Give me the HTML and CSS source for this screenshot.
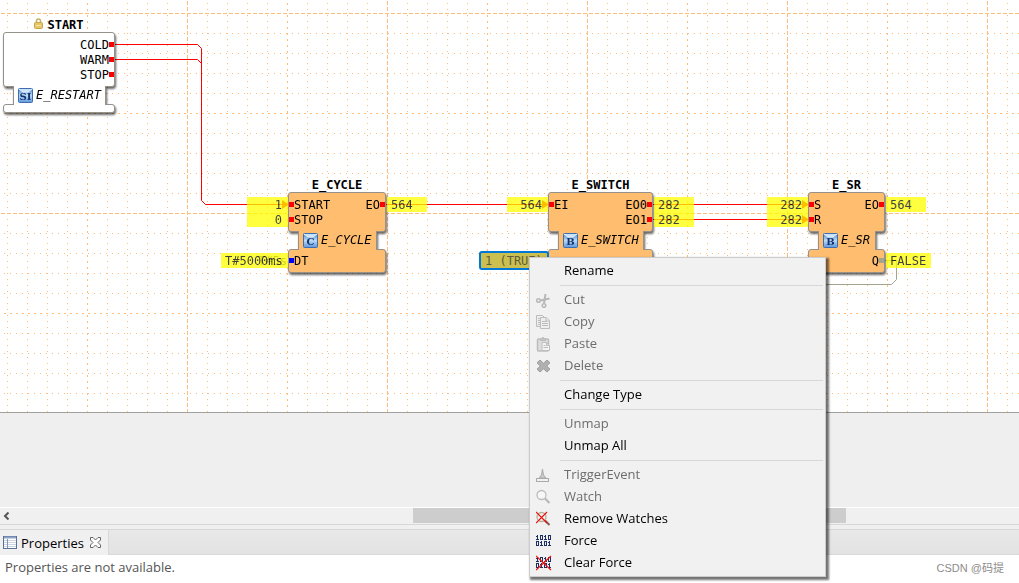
FILE: index.html
```
<!DOCTYPE html>
<html lang="en">
<head>
    <meta charset="UTF-8">
    <meta name="viewport" content="width=device-width, initial-scale=1.0">
    <title>Function Block Editor</title>
    <link rel="stylesheet" href="styles.css">
</head>
<body>
    <main class="editor">
        <div class="canvas">
            <svg class="grid" width="100%" height="100%" shape-rendering="crispEdges">
                <defs>
                    <pattern id="dots-v" width="20" height="6" patternUnits="userSpaceOnUse">
                        <rect x="7" y="3" width="1" height="1" fill="#ffbd78" />
                    </pattern>
                    <pattern id="dots-h" width="6" height="20" patternUnits="userSpaceOnUse">
                        <rect x="4" y="13" width="1" height="1" fill="#ffbd78" />
                    </pattern>
                    <pattern id="major-v" width="200" height="6" patternUnits="userSpaceOnUse">
                        <path d="M87 0h1v6h-1zM187 0h1v6h-1z" fill="#fff" />
                        <path d="M87 3h1v2h-1zM187 1h1v4h-1z" fill="#ffbd78" />
                    </pattern>
                    <pattern id="major-h" width="6" height="200" patternUnits="userSpaceOnUse">
                        <path d="M0 13h6v1h-6zM0 113h6v1h-6z" fill="#fff" />
                        <path d="M1 13h4v1h-4zM4 113h2v1h-2z" fill="#ffbd78" />
                    </pattern>
                </defs>
                <rect width="100%" height="100%" fill="url(#dots-v)" />
                <rect width="100%" height="100%" fill="url(#dots-h)" />
                <rect width="100%" height="100%" fill="url(#major-v)" />
                <rect width="100%" height="100%" fill="url(#major-h)" />
            </svg>
            <svg class="wires" width="100%" height="100%" fill="none" stroke="#f00">
                <path d="M114 44.500H197.500L201.500 48.500V200.500L205.500 204.500H289" />
                <path d="M114 59.500H197.500L201.500 63.500" />
                <path d="M386 204.500H549M653 204.500H809M653 219.500H809" />
                <path d="M885 260.500H896.500V279.500L891.500 284.500H540" stroke="#a0a58c" />
                <path d="M282 200L289 204.500L282 209ZM542 200L549 204.500L542 209ZM802 200L809 204.500L802 209ZM802 215L809 219.500L802 224Z" fill="#f00" stroke="none" />
            </svg>

            <section class="block start">
                <h2>
                    <svg width="9" height="11" viewBox="0 0 9 11"><path d="M2.500 5V3a2 2 0 0 1 4 0v2" fill="none" stroke="#c4ae68" stroke-width="1.500" /><rect x=".5" y="4.500" width="8" height="6" rx="1" fill="#e6c665" stroke="#c8a64f" /><path d="M2 7.500h5" stroke="#f7e3a0" /></svg>
                    START
                </h2>
                <div class="shape">
                    <div class="part events">
                        <ul class="pins out"><li>COLD</li><li>WARM</li><li>STOP</li></ul>
                    </div>
                    <div class="neck">
                        <svg class="kind" viewBox="0 0 15 15"><use href="#badge" /><text x="7.500" y="12">SI</text></svg>
                        <em>E_RESTART</em>
                    </div>
                    <div class="part data"></div>
                </div>
            </section>

            <section class="block cycle">
                <h2>E_CYCLE</h2>
                <div class="shape">
                    <div class="part events">
                        <ul class="pins in"><li>START</li><li>STOP</li></ul>
                        <ul class="pins out"><li>EO</li></ul>
                    </div>
                    <div class="neck">
                        <svg class="kind" viewBox="0 0 15 15"><use href="#badge" /><text x="7.500" y="12">C</text></svg>
                        <em>E_CYCLE</em>
                    </div>
                    <div class="part data">
                        <ul class="pins in"><li class="time">DT</li></ul>
                    </div>
                </div>
            </section>

            <section class="block switch">
                <h2>E_SWITCH</h2>
                <div class="shape">
                    <div class="part events">
                        <ul class="pins in"><li>EI</li></ul>
                        <ul class="pins out"><li>EO0</li><li>EO1</li></ul>
                    </div>
                    <div class="neck">
                        <svg class="kind" viewBox="0 0 15 15"><use href="#badge" /><text x="7.500" y="12">B</text></svg>
                        <em>E_SWITCH</em>
                    </div>
                    <div class="part data"></div>
                </div>
            </section>

            <section class="block sr">
                <h2>E_SR</h2>
                <div class="shape">
                    <div class="part events">
                        <ul class="pins in"><li>S</li><li>R</li></ul>
                        <ul class="pins out"><li>EO</li></ul>
                    </div>
                    <div class="neck">
                        <svg class="kind" viewBox="0 0 15 15"><use href="#badge" /><text x="7.500" y="12">B</text></svg>
                        <em>E_SR</em>
                    </div>
                    <div class="part data">
                        <ul class="pins out"><li class="bool">Q</li></ul>
                    </div>
                </div>
            </section>

            <span class="literal">T#5s</span>
            <div class="watch left w-start">1<br>0</div>
            <div class="watch w-dt">T#5000ms</div>
            <div class="watch w-cycle-eo">564</div>
            <div class="watch left w-ei">564</div>
            <div class="watch w-switch-eo">282<br>282</div>
            <div class="watch left w-sr-in">282<br>282</div>
            <div class="watch w-sr-eo">564</div>
            <div class="watch w-q">FALSE</div>
            <div class="watch forced">1 (TRUE)</div>
        </div>
        <div class="below"></div>
        <div class="scrollbar">
            <button type="button" aria-label="Scroll left">
                <svg width="7" height="8" viewBox="0 0 7 8"><path d="M5.500 .5L2 4L5.500 7.500" fill="none" stroke="#555" stroke-width="2" /></svg>
            </button>
            <div class="track"><div class="thumb"></div></div>
        </div>
    </main>

    <section class="view">
        <div class="tabs">
            <button type="button" class="tab">
                <svg width="14" height="13" viewBox="0 0 14 13"><rect x=".5" y=".5" width="13" height="12" fill="#fff" stroke="#5b6f98" /><path d="M1 1.500H13" stroke="#8fa3c8" stroke-width="2" /><path d="M1 4.500H13M1 6.500H13M1 8.500H13M1 10.500H13" stroke="#ccd5e4" /><path d="M4.500 3V12" stroke="#8294b8" /></svg>
                Properties
                <svg class="close" width="11" height="11" viewBox="0 0 11 11"><path d="M.5 .5H3L5.500 3L8 .5H10.500V3L8 5.500L10.500 8V10.500H8L5.500 8L3 10.500H.5V8L3 5.500L.5 3Z" fill="#fff" stroke="#666" /></svg>
            </button>
        </div>
        <div class="view-body">
            <p>Properties are not available.</p>
            <span class="credit">CSDN @码提</span>
        </div>
    </section>

    <div class="menu" role="menu">
        <button type="button" role="menuitem"><span>Rename</span></button>
        <hr>
        <button type="button" role="menuitem" disabled>
            <svg viewBox="0 0 16 16" fill="none" stroke="#b8b8b8" stroke-width="1.500"><circle cx="2.500" cy="8.500" r="1.800" /><circle cx="8" cy="13.500" r="1.800" /><path d="M4.500 8.500L13.500 6.500M8 11.500L9.500 2" stroke-width="2" /></svg>
            <span>Cut</span>
        </button>
        <button type="button" role="menuitem" disabled>
            <svg viewBox="0 0 16 16" fill="#eee" stroke="#bdbdbd"><path d="M.5 1.500H6.500L9.500 4.500V12.500H.5Z" /><path d="M4.500 3.500H10L13.500 6.500V14.500H4.500Z" /><path d="M2 4.500H4M2 6.500H4M2 8.500H4M2 10.500H4M6 7.500H11M6 9.500H12M6 11.500H12M10 4V7H13" /></svg>
            <span>Copy</span>
        </button>
        <button type="button" role="menuitem" disabled>
            <svg viewBox="0 0 16 16" fill="#ddd" stroke="#bdbdbd"><rect x="1.500" y="3" width="11" height="12" rx="1" stroke-width="1.500" /><path d="M4.500 4.500V2.500H6L7 1L8 2.500H9.500V4.500Z" fill="#c4c4c4" /><path d="M6 6.500H10.500L13.500 9.500V14.500H6Z" fill="#f3f3f3" /><path d="M7.500 9.500H9.500M7.500 11.500H12M10.500 7V9.500H13" /></svg>
            <span>Paste</span>
        </button>
        <button type="button" role="menuitem" disabled>
            <svg viewBox="0 0 16 16"><path d="M4 2L7.500 5.300L11 2L14 4.800L10.700 8L14 11.200L11 14L7.500 10.800L4 14L1 11.200L4.300 8L1 4.800Z" fill="#b0b0b0" stroke="#9c9c9c" /></svg>
            <span>Delete</span>
        </button>
        <hr>
        <button type="button" role="menuitem"><span>Change Type</span></button>
        <hr>
        <button type="button" role="menuitem" disabled><span>Unmap</span></button>
        <button type="button" role="menuitem"><span>Unmap All</span></button>
        <hr>
        <button type="button" role="menuitem" disabled>
            <svg viewBox="0 0 16 16"><path d="M0 11.500H13M0 14.500H13M.5 12V14M12.500 12V14" stroke="#aaa" fill="none" /><path d="M3 11L5.500 8L6.500 2L7.500 8L10 11Z" fill="#ccc" stroke="#aaa" /></svg>
            <span>TriggerEvent</span>
        </button>
        <button type="button" role="menuitem" disabled>
            <svg viewBox="0 0 16 16"><circle cx="5.500" cy="6" r="4.500" fill="#f7f7f7" stroke="#bdbdbd" stroke-width="1.300" /><path d="M9 9.500L13.500 14" stroke="#b5b5b5" stroke-width="2" /></svg>
            <span>Watch</span>
        </button>
        <button type="button" role="menuitem">
            <svg viewBox="0 0 16 16"><circle cx="5.500" cy="6" r="4.500" fill="#edf3ee" stroke="#b5b09a" stroke-width="1.300" /><path d="M9 9.500L13.500 14" stroke="#7a5f50" stroke-width="2" /><path d="M0 1L11 12M11 1L0 12" stroke="#f01010" stroke-width="1.200" /></svg>
            <span>Remove Watches</span>
        </button>
        <button type="button" role="menuitem">
            <svg viewBox="0 0 16 16"><use href="#bits" /></svg>
            <span>Force</span>
        </button>
        <button type="button" role="menuitem">
            <svg viewBox="0 0 16 16"><use href="#bits" /><path d="M0 1L15 15M15 1L0 15" stroke="#f01010" stroke-width="1.200" /></svg>
            <span>Clear Force</span>
        </button>
    </div>

    <svg width="0" height="0" class="symbols">
        <defs>
            <linearGradient id="sky" x1="0" y1="0" x2="0" y2="1">
                <stop offset="0" stop-color="#4f86c9" />
                <stop offset=".5" stop-color="#b9daf6" />
                <stop offset="1" stop-color="#5d95dc" />
            </linearGradient>
            <g id="badge">
                <rect x=".5" y=".5" width="14" height="14" rx="1" fill="url(#sky)" stroke="#3f6eb0" />
                <path d="M1 1L5 4H10L14 1" fill="#c9e2f8" stroke="#e4f1fc" />
            </g>
            <!-- two rows of binary digits -->
            <g id="bits" fill="none" stroke="#1c2f5e" shape-rendering="crispEdges">
                <path d="M0 3.500H1M1.500 2V7M0 6.500H3M8 3.500H9M9.500 2V7M8 6.500H11" />
                <path d="M4.500 2.500H6.500V6.500H4.500ZM12.500 2.500H14.500V6.500H12.500Z" />
                <path d="M.5 8.500H2.500V12.500H.5ZM8.500 8.500H10.500V12.500H8.500Z" />
                <path d="M4 9.500H5M5.500 8V13M4 12.500H7M12 9.500H13M13.500 8V13M12 12.500H15" />
            </g>
        </defs>
    </svg>
</body>
</html>
```
FILE: styles.css
```
* {
    box-sizing: border-box;
}
body {
    display: flex;
    flex-direction: column;
    height: 100vh;
    margin: 0;
    overflow: hidden;
    background: #f0f0f0;
    color: #000;
    font-family: "Open Sans", "Noto Sans", sans-serif;
    font-size: 13px;
}
button {
    margin: 0;
    padding: 0;
    border: none;
    background: none;
    color: inherit;
    font: inherit;
}
ul, p, h2 {
    margin: 0;
    padding: 0;
}
.symbols {
    position: absolute;
}

/* Editor */
.editor {
    flex: 1;
    display: flex;
    flex-direction: column;
    min-height: 0;
}
.canvas {
    position: relative;
    flex: 1;
    overflow: hidden;
    background: #fff;
    border-bottom: 1px solid #a0a0a0;
    font-family: "DejaVu Sans Mono", monospace;
    font-size: 12px;
    line-height: 15px;
}
.grid, .wires {
    position: absolute;
    top: 0;
    left: 0;
}
.below {
    height: 94px;
    background: #efefef;
}
.scrollbar {
    display: flex;
    height: 18px;
    border-top: 1px solid #fff;
    border-bottom: 1px solid #d8d8d8;
}
.scrollbar button {
    display: flex;
    align-items: center;
    padding-left: 3px;
    width: 17px;
}
.track {
    flex: 1;
    margin-right: 17px;
}
.thumb {
    width: 44%;
    height: 15px;
    margin-left: 40.2%;
    background: #cdcdcd;
}

/* Function blocks */
.block {
    position: absolute;
    --fill: #ffbd70;
    --edge: #94908a;
}
.block h2 {
    display: flex;
    justify-content: center;
    gap: 4px;
    height: 15px;
    padding-top: 1px;
    font-size: 12px;
    line-height: 15px;
}
.shape {
    filter: drop-shadow(1px 2px 1px rgba(0, 0, 0, 0.6));
}
.part {
    display: flex;
    justify-content: space-between;
    background: var(--fill);
    border: 1px solid var(--edge);
    border-radius: 3px;
}
.events {
    padding: 4px 0;
}
.data {
    min-height: 24px;
    padding: 3px 0 4px;
}
.start .data {
    min-height: 9px;
    padding: 0;
}
.neck {
    position: relative;
    z-index: 1;
    display: flex;
    align-items: center;
    gap: 3px;
    height: 19px;
    margin: -1px 9px -1px 10px;
    padding-left: 4px;
    background: var(--fill);
    border: solid var(--edge);
    border-width: 0 1px;
}
.kind {
    flex: none;
    width: 15px;
    height: 15px;
}
.kind text {
    fill: #14336e;
    font: bold 10px "DejaVu Serif", serif;
    text-anchor: middle;
}
.pins {
    list-style: none;
}
.pins li {
    display: flex;
    height: 15px;
    line-height: 17px;
}
.pins.out li {
    flex-direction: row-reverse;
}
.pins.out {
    margin-left: auto;
}
.pins li::before {
    content: "";
    width: 5px;
    height: 5px;
    margin-top: 5px;
    background: #f00;
}
.pins .time::before {
    background: #00f;
}
.pins .bool::before {
    background: #a0a58c;
}
.start {
    --fill: #fff;
    top: 17px;
    left: 3px;
    width: 112px;
}
.cycle {
    top: 177px;
    left: 288px;
    width: 98px;
}
.switch {
    top: 177px;
    left: 548px;
    width: 105px;
}
.sr {
    top: 177px;
    left: 808px;
    width: 77px;
}

/* Watched values */
.watch {
    position: absolute;
    height: 15px;
    padding: 1px 4px 0;
    background: #ff0;
    opacity: 0.75;
    white-space: nowrap;
}
.watch.left {
    text-align: right;
    padding-right: 6px;
}
.watch.w-start, .watch.w-switch-eo, .watch.w-sr-in {
    height: 30px;
}
.w-start {
    top: 197px;
    left: 247px;
    width: 41px;
}
.w-dt {
    top: 253px;
    left: 221px;
    width: 67px;
}
.w-cycle-eo {
    top: 197px;
    left: 387px;
    width: 40px;
}
.w-ei {
    top: 197px;
    left: 507px;
    width: 41px;
}
.w-switch-eo {
    top: 197px;
    left: 654px;
    width: 40px;
}
.w-sr-in {
    top: 197px;
    left: 767px;
    width: 41px;
}
.w-sr-eo {
    top: 197px;
    left: 886px;
    width: 40px;
}
.w-q {
    top: 253px;
    left: 886px;
    width: 45px;
}
.watch.forced {
    top: 251px;
    left: 479px;
    width: 70px;
    height: 19px;
    background: #cbbf50;
    border: 2px solid #0078d7;
    border-radius: 3px;
    opacity: 1;
    color: #5f5c3c;
}
.literal {
    position: absolute;
    top: 254px;
    left: 258px;
    color: #555;
}

/* Properties view */
.view {
    margin-top: 4px;
    border-top: 1px solid #d8d8d8;
}
.tabs {
    display: flex;
    height: 25px;
    background: linear-gradient(#e8e8e8, #e3e3e3);
    border-bottom: 1px solid #d8d8d8;
}
.tab {
    display: flex;
    align-items: center;
    gap: 4px;
    height: 25px;
    padding: 0 7px 0 3px;
    background: #f0f0f0;
    border-right: 1px solid #d8d8d8;
}
.close {
    margin-left: 2px;
}
.view-body {
    display: flex;
    justify-content: space-between;
    align-items: center;
    height: 28px;
    padding: 0 15px 4px 5px;
    background: #fff;
    color: #555;
}
.credit {
    color: #8c8c8c;
    font-family: "Liberation Sans", "Noto Sans CJK SC", sans-serif;
    font-size: 11px;
}

/* Context menu */
.menu {
    position: absolute;
    top: 257px;
    left: 529px;
    width: 297px;
    padding: 2px;
    background: #f1f1f1;
    border: 1px solid #ccc;
    box-shadow: 2px 2px 2px 1px rgba(0, 0, 0, 0.55);
}
.menu button {
    display: grid;
    grid-template-columns: 16px auto;
    column-gap: 12px;
    align-items: center;
    width: 100%;
    height: 22px;
    padding-left: 4px;
    text-align: left;
}
.menu button span {
    grid-column: 2;
    padding-bottom: 2px;
}
.menu button svg {
    width: 16px;
    height: 16px;
}
.menu button:disabled {
    color: #6d6d6d;
}
.menu hr {
    height: 1px;
    margin: 3px 0 3px 28px;
    border: none;
    background: #d7d7d7;
}
```
